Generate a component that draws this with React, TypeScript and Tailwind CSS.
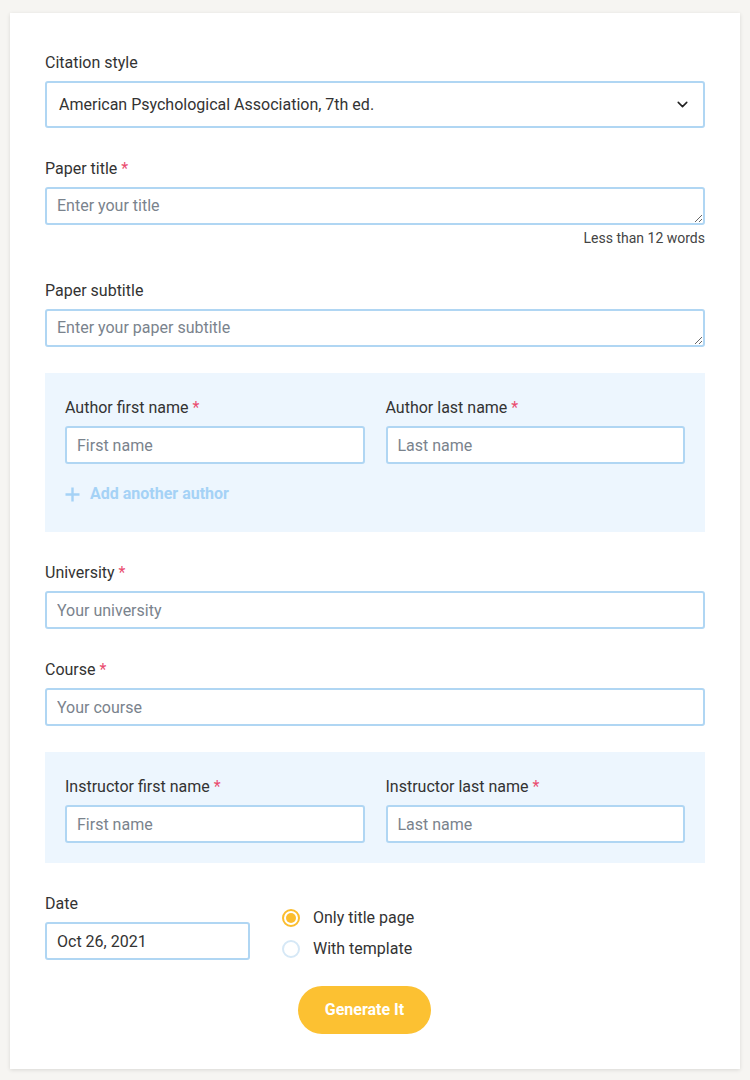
import { ChevronDown } from 'lucide-react';

const font = { fontFamily: 'Roboto, "Liberation Sans", sans-serif' };

function Label({ text, required }: { text: string; required?: boolean }) {
  return (
    <div className="text-[16px] leading-[22px] text-[#333333] mb-[7px]">
      {text}
      {required && <span className="text-[#ea4c6f]"> *</span>}
    </div>
  );
}

function TextInput({ placeholder, value }: { placeholder?: string; value?: string }) {
  return (
    <input
      type="text"
      readOnly
      placeholder={placeholder}
      defaultValue={value}
      className="block w-full h-[38px] px-[10px] rounded-[3px] border-2 border-[#b0d6f3] bg-white text-[16px] text-[#333333] placeholder:text-[#7a838d] outline-none"
    />
  );
}

function TextArea({ placeholder }: { placeholder: string }) {
  return (
    <textarea
      rows={1}
      readOnly
      placeholder={placeholder}
      className="block w-full h-[38px] px-[10px] pt-[7px] rounded-[3px] border-2 border-[#b0d6f3] bg-white text-[16px] leading-5 text-[#333333] placeholder:text-[#7a838d] outline-none resize-y"
    />
  );
}

function Radio({ checked, label }: { checked?: boolean; label: string }) {
  return (
    <label className="flex items-center gap-[13px] h-[20px]">
      {checked ? (
        <span className="w-[18px] h-[18px] rounded-full border-2 border-[#fbbd2e] flex items-center justify-center">
          <span className="w-[10px] h-[10px] rounded-full bg-[#fbbd2e]" />
        </span>
      ) : (
        <span className="w-[18px] h-[18px] rounded-full border-2 border-[#d6e8f6]" />
      )}
      <span className="text-[16px] text-[#333333]">{label}</span>
    </label>
  );
}

export default function App() {
  return (
    <div className="min-h-[1080px] bg-[#f6f5f2] pt-[13px] px-[10px] pb-[11px]" style={font}>
      <div className="bg-white shadow-[0_1px_4px_rgba(0,0,0,0.12)] px-[35px] pt-[39px] pb-[35px]">
        <Label text="Citation style" />
        <div className="flex items-center justify-between h-[47px] pl-[12px] pr-[12px] rounded-[3px] border-2 border-[#b0d6f3]">
          <span className="text-[16px] text-[#333333]">American Psychological Association, 7th ed.</span>
          <ChevronDown size={17} strokeWidth={2.2} className="text-[#222]" />
        </div>

        <div className="mt-[30px]">
          <Label text="Paper title" required />
          <TextArea placeholder="Enter your title" />
          <div className="mt-[5px] text-right text-[14px] leading-4 text-[#444]">Less than 12 words</div>
        </div>

        <div className="mt-[34px]">
          <Label text="Paper subtitle" />
          <TextArea placeholder="Enter your paper subtitle" />
        </div>

        <div className="mt-[26px] bg-[#edf6fe] px-[20px] pt-[24px] pb-[28px]">
          <div className="grid grid-cols-2 gap-[21px]">
            <div>
              <Label text="Author first name" required />
              <TextInput placeholder="First name" />
            </div>
            <div>
              <Label text="Author last name" required />
              <TextInput placeholder="Last name" />
            </div>
          </div>
          <div className="mt-[20px] flex items-center gap-[10px] h-5 text-[16px] font-bold text-[#a5d2f6]">
            <svg width="15" height="15" viewBox="0 0 15 15" className="shrink-0">
              <path d="M7.5 0.5v14M0.5 7.5h14" stroke="currentColor" strokeWidth="2.4" />
            </svg>
            <span>Add another author</span>
          </div>
        </div>

        <div className="mt-[30px]">
          <Label text="University" required />
          <TextInput placeholder="Your university" />
        </div>

        <div className="mt-[30px]">
          <Label text="Course" required />
          <TextInput placeholder="Your course" />
        </div>

        <div className="mt-[26px] bg-[#edf6fe] px-[20px] pt-[24px] pb-[20px]">
          <div className="grid grid-cols-2 gap-[21px]">
            <div>
              <Label text="Instructor first name" required />
              <TextInput placeholder="First name" />
            </div>
            <div>
              <Label text="Instructor last name" required />
              <TextInput placeholder="Last name" />
            </div>
          </div>
        </div>

        <div className="mt-[30px] flex items-start gap-[32px]">
          <div className="w-[205px]">
            <Label text="Date" />
            <TextInput value="Oct 26, 2021" />
          </div>
          <div className="pt-[15px] flex flex-col gap-[11px]">
            <Radio checked label="Only title page" />
            <Radio label="With template" />
          </div>
        </div>

        <div className="mt-[26px] pl-[253px]">
          <button className="w-[133px] h-[48px] rounded-full bg-[#fcc132] text-white text-[16px] font-bold">
            Generate It
          </button>
        </div>
      </div>
    </div>
  );
}
